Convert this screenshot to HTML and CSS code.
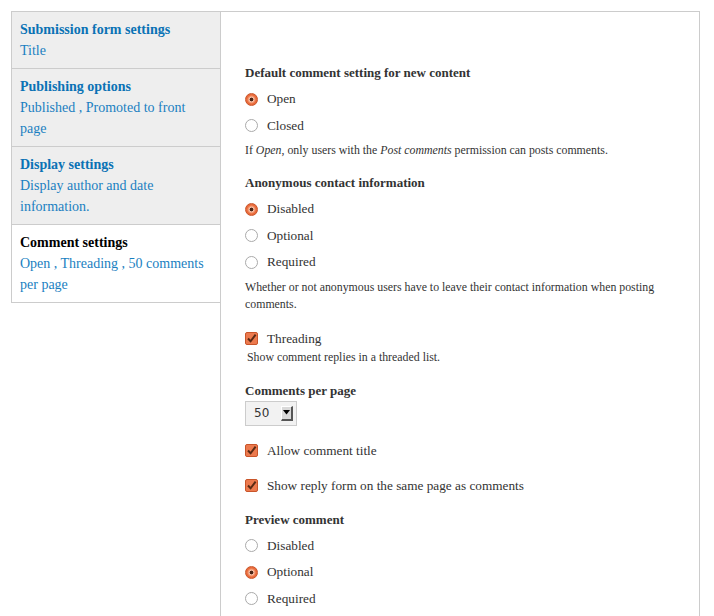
FILE: index.html
```html
<!DOCTYPE html>
<html lang="en">
<head>
    <meta charset="UTF-8">
    <title>Comment settings</title>
    <link rel="stylesheet" href="styles.css">
</head>
<body>
    <div class="vertical-tabs">
        <ul class="tabs-list">
            <li class="tab">
                <a href="#" class="tab-title">Submission form settings</a>
                <span class="tab-summary">Title</span>
            </li>
            <li class="tab">
                <a href="#" class="tab-title">Publishing options</a>
                <span class="tab-summary">Published , Promoted to front page</span>
            </li>
            <li class="tab">
                <a href="#" class="tab-title">Display settings</a>
                <span class="tab-summary">Display author and date information.</span>
            </li>
            <li class="tab selected">
                <a href="#" class="tab-title">Comment settings</a>
                <span class="tab-summary">Open , Threading , 50 comments per page</span>
            </li>
        </ul>

        <div class="tab-panel">
            <div class="form-item first">
                <div class="item-label">Default comment setting for new content</div>
                <div class="radio-row"><span class="radio checked"></span>Open</div>
                <div class="radio-row"><span class="radio"></span>Closed</div>
            </div>
            <div class="description">If <em>Open</em>, only users with the <em>Post comments</em> permission can posts comments.</div>

            <div class="form-item mid">
                <div class="item-label">Anonymous contact information</div>
                <div class="radio-row"><span class="radio checked"></span>Disabled</div>
                <div class="radio-row"><span class="radio"></span>Optional</div>
                <div class="radio-row"><span class="radio"></span>Required</div>
            </div>
            <div class="description">Whether or not anonymous users have to leave their contact information when posting comments.</div>

            <div class="form-item">
                <div class="check-row">
                    <span class="checkbox"><svg width="13" height="13" viewBox="0 0 13 13"><path d="M3 6.5 L5.6 9.3 L10.6 2.6" fill="none" stroke="#5a2a14" stroke-width="2"/></svg></span>Threading
                </div>
                <div class="description indent">Show comment replies in a threaded list.</div>
            </div>

            <div class="form-item">
                <div class="item-label">Comments per page</div>
                <div class="select">
                    <span class="select-value">50</span>
                    <span class="select-arrow"><svg width="7" height="5" viewBox="0 0 7 5"><path d="M0 0 H7 L3.5 4.5 Z" fill="#000"/></svg></span>
                </div>
            </div>

            <div class="form-item mid">
                <div class="check-row">
                    <span class="checkbox"><svg width="13" height="13" viewBox="0 0 13 13"><path d="M3 6.5 L5.6 9.3 L10.6 2.6" fill="none" stroke="#5a2a14" stroke-width="2"/></svg></span>Allow comment title
                </div>
            </div>

            <div class="form-item mid">
                <div class="check-row">
                    <span class="checkbox"><svg width="13" height="13" viewBox="0 0 13 13"><path d="M3 6.5 L5.6 9.3 L10.6 2.6" fill="none" stroke="#5a2a14" stroke-width="2"/></svg></span>Show reply form on the same page as comments
                </div>
            </div>

            <div class="form-item mid">
                <div class="item-label">Preview comment</div>
                <div class="radio-row"><span class="radio"></span>Disabled</div>
                <div class="radio-row"><span class="radio checked"></span>Optional</div>
                <div class="radio-row"><span class="radio"></span>Required</div>
            </div>
        </div>
    </div>
</body>
</html>
```

FILE: styles.css
```css
* { box-sizing: border-box; }

body {
    margin: 0;
    padding: 11px;
    font-family: "Liberation Serif", "Times New Roman", serif;
    color: #333;
    background: #fff;
}

.vertical-tabs {
    display: flex;
    align-items: flex-start;
}

.tabs-list {
    width: 209px;
    margin: 0;
    padding: 0;
    list-style: none;
    border-top: 1px solid #ccc;
    border-left: 1px solid #ccc;
    flex-shrink: 0;
}

.tab {
    padding: 7px 8px;
    background: #eee;
    border-bottom: 1px solid #ccc;
    font-size: 14px;
    line-height: 21px;
}

.tab.selected { background: #fff; }

.tab-title {
    display: block;
    font-weight: bold;
    color: #0a72b5;
    text-decoration: none;
}

.tab.selected .tab-title { color: #000; }

.tab-summary {
    display: block;
    color: #1a7fc1;
}

.tab-panel {
    width: 480px;
    min-height: 640px;
    border: 1px solid #ccc;
    padding: 0 24px 20px;
}

.form-item { margin-top: 16px; }
.form-item.first { margin-top: 52px; }
.form-item.mid { margin-top: 15px; }

.item-label {
    font-size: 13px;
    font-weight: bold;
    line-height: 18px;
    margin-bottom: 4px;
}

.radio-row {
    display: flex;
    align-items: center;
    height: 26.5px;
    font-size: 13.25px;
}

.check-row {
    display: flex;
    align-items: center;
    height: 20px;
    font-size: 13.25px;
}

.radio {
    width: 13px;
    height: 13px;
    border-radius: 50%;
    border: 1px solid #aaa;
    background: #fff;
    margin-right: 9px;
    flex-shrink: 0;
}

.radio.checked {
    border-color: #c9552a;
    background: radial-gradient(circle, #4a2414 0, #4a2414 1.6px, #f6c1a8 2.2px, #f39a74 3.2px, #e96a3a 4.5px);
}

.checkbox {
    width: 13px;
    height: 13px;
    border-radius: 2px;
    border: 1px solid #c9552a;
    background: #ec7a4e;
    margin-right: 9px;
    flex-shrink: 0;
    display: flex;
    align-items: center;
    justify-content: center;
}

.checkbox svg { display: block; margin: -1px; }

.description {
    font-size: 11.85px;
    line-height: 17px;
    margin-top: 3px;
}

.description.indent {
    margin-top: 0;
    padding-left: 2px;
}

.select {
    display: flex;
    align-items: center;
    width: 52px;
    height: 25px;
    margin-top: -3px;
    border: 1px solid #ccc;
    background: #f2f2f2;
    font-family: "DejaVu Sans", sans-serif;
    font-size: 12px;
    color: #333;
}

.select-value {
    flex: 1;
    padding-left: 8px;
}

.select-arrow {
    width: 12px;
    height: 15px;
    margin-right: 3px;
    background: #d9d9d9;
    border-top: 1px solid #fff;
    border-left: 1px solid #fff;
    border-right: 2px solid #555;
    border-bottom: 2px solid #555;
    display: flex;
    align-items: center;
    justify-content: center;
}

.select-arrow svg { display: block; }
```
